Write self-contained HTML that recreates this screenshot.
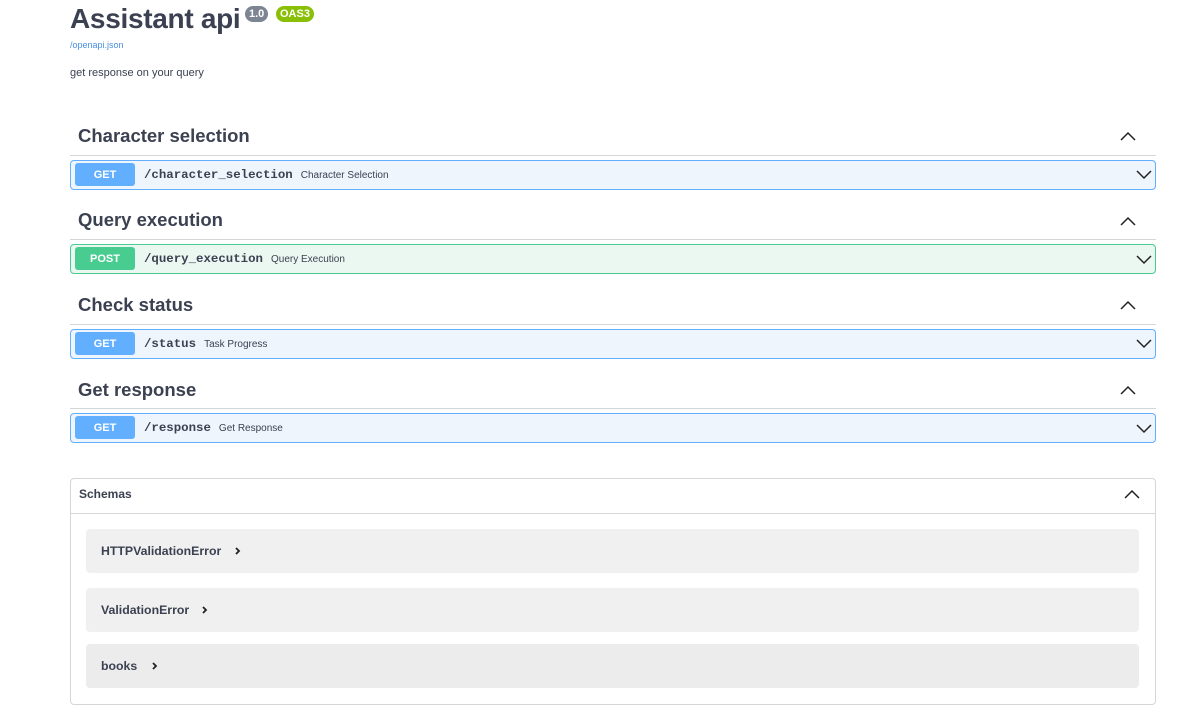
<!DOCTYPE html>
<html><head><style>
body{margin:0;background:#fff;font-family:"Liberation Sans",sans-serif;color:#3b4151;width:1200px;height:719px;overflow:hidden;position:relative}
.a{position:absolute}
.title{left:70px;top:3px;font-size:28px;font-weight:bold;color:#3b4151;letter-spacing:-0.3px}
.badge{position:absolute;font-size:11px;font-weight:bold;color:#fff;border-radius:8px;padding:2px 4px;line-height:12px}
.tag{left:78px;font-size:18.5px;font-weight:bold;color:#3b4151}
.line{left:70px;width:1086px;height:1px;background:#d5d6d8}
.op{left:70px;width:1084px;height:28px;border:1px solid;border-radius:4px}
.get{background:#eff5fc;border-color:#61affe}
.post{background:#ebf7f1;border-color:#49cc90}
.m{position:absolute;left:4px;top:2px;width:60px;height:23px;border-radius:3px;color:#fff;font-weight:bold;font-size:11px;text-align:center;line-height:25px}
.path{position:absolute;left:73px;top:7px;font-family:"Liberation Mono",monospace;font-weight:bold;font-size:12.4px;color:#3b4151}
.desc{font-family:"Liberation Sans",sans-serif;font-weight:normal;font-size:10px;margin-left:8px}
.sch{left:70px;top:478px;width:1084px;height:225px;border:1px solid #d5d6d8;border-radius:4px}
.item{position:absolute;left:15px;width:1053px;height:44px;background:#f0f0f0;border-radius:4px;font-size:12.3px;font-weight:bold;color:#3b4151;line-height:44px;padding-left:15px;box-sizing:border-box}
</style></head><body>
<div class="a title">Assistant api</div>
<span class="badge" style="left:245px;top:6px;background:#7d8492">1.0</span>
<span class="badge" style="left:276px;top:6px;background:#89bf04">OAS3</span>
<div class="a" style="left:70px;top:40px;font-size:9px;color:#4990e2">/openapi.json</div>
<div class="a" style="left:70px;top:67px;font-size:11px">get response on your query</div>

<div class="a tag" style="top:125px">Character selection</div>
<div class="a line" style="top:155px"></div>
<div class="a op get" style="top:160px"><div class="m" style="background:#61affe">GET</div><div class="path">/character_selection<span class="desc">Character Selection</span></div></div>

<div class="a tag" style="top:209px">Query execution</div>
<div class="a line" style="top:239px"></div>
<div class="a op post" style="top:244px"><div class="m" style="background:#49cc90">POST</div><div class="path">/query_execution<span class="desc">Query Execution</span></div></div>

<div class="a tag" style="top:294px">Check status</div>
<div class="a line" style="top:324px"></div>
<div class="a op get" style="top:329px"><div class="m" style="background:#61affe">GET</div><div class="path">/status<span class="desc">Task Progress</span></div></div>

<div class="a tag" style="top:379px">Get response</div>
<div class="a line" style="top:408px"></div>
<div class="a op get" style="top:413px"><div class="m" style="background:#61affe">GET</div><div class="path">/response<span class="desc">Get Response</span></div></div>

<div class="a sch">
<div style="height:34px;border-bottom:1px solid #d5d6d8;font-size:12px;font-weight:bold;line-height:30px;padding-left:8px">Schemas</div>
<div class="item" style="top:50px">HTTPValidationError</div>
<div class="item" style="top:109px">ValidationError</div>
<div class="item" style="top:165px;background:#ececec">books</div>
</div>

<svg class="a" style="left:0;top:0" width="1200" height="719" fill="none" stroke="#222" stroke-width="1.5">
<path d="M1121 140l7-7 7 7M1121 225l7-7 7 7M1121 309l7-7 7 7M1121 394l7-7 7 7M1125 498l7-7 7 7"/>
<path d="M1137 171l7 7 7-7M1137 256l7 7 7-7M1137 340l7 7 7-7M1137 425l7 7 7-7"/>
<path d="M236 548l3 3-3 3M203 607l3 3-3 3M153 663l3 3-3 3" stroke-width="1.8"/>
</svg>
</body></html>
